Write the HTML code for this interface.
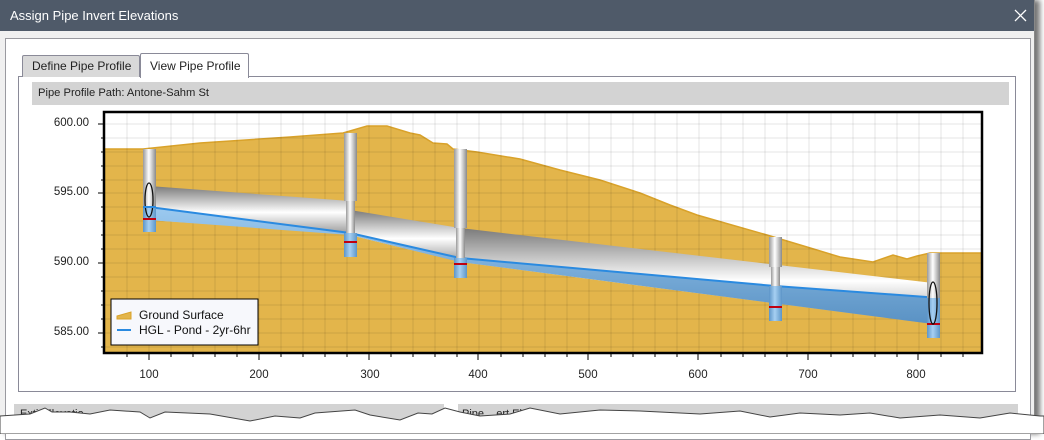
<!DOCTYPE html>
<html><head><meta charset="utf-8"><style>
body{margin:0;width:1044px;height:434px;background:#fff;position:relative;overflow:hidden;font-family:"Liberation Sans",sans-serif;}
.win{position:absolute;left:0;top:0;width:1034px;height:434px;background:#f0f0f0;border-right:1px solid #888;box-shadow:5px 0 5px #777;}
.title{position:absolute;left:0;top:0;width:1034px;height:31px;background:#4f5a69;color:#fff;font-size:13px;line-height:31px;}
.title span{position:absolute;left:10px}
.inner{position:absolute;left:5px;top:38px;width:1024px;height:400px;background:#fff;border:1px solid #9a9aa0;}
.tab{position:absolute;top:55px;height:21px;font-size:12px;line-height:21px;color:#222;border:1px solid #8a8a98;border-bottom:none;border-radius:2px 2px 0 0;}
.panel{position:absolute;left:18px;top:76px;width:996px;height:314px;border:1px solid #8a8a98;background:#fff;}
.hdr{position:absolute;left:32px;top:82px;width:977px;height:23px;background:#d3d3d3;font-size:11.2px;line-height:23px;color:#222;}
.ylab{position:absolute;left:40px;width:49px;text-align:right;font-size:11.5px;color:#222;}
.xlab{position:absolute;top:369px;width:40px;text-align:center;font-size:11.5px;color:#222;}
.strip{position:absolute;top:404px;height:30px;background:#d3d3d3;}
</style></head><body>
<div class="win">
<div class="title"><span>Assign Pipe Invert Elevations</span>
<svg style="position:absolute;left:1014px;top:9px" width="13" height="13"><path d="M1 1L12 12M12 1L1 12" stroke="#fff" stroke-width="1.3"/></svg></div>
<div class="inner"></div>
<div class="panel"></div>
<div class="tab" style="left:22px;width:116px;background:#d9d9d9;"><span style="padding-left:9px">Define Pipe Profile</span></div>
<div class="tab" style="left:140px;top:53px;height:24px;width:107px;background:#fff;line-height:25px;"><span style="padding-left:9px">View Pipe Profile</span></div>
<div class="hdr"><span style="padding-left:6px">Pipe Profile Path: Antone-Sahm St</span></div>
<div class="ylab" style="top:117px">600.00</div>
<div class="ylab" style="top:186px">595.00</div>
<div class="ylab" style="top:256px">590.00</div>
<div class="ylab" style="top:326px">585.00</div>
<div class="xlab" style="left:129px">100</div><div class="xlab" style="left:239px">200</div><div class="xlab" style="left:350px">300</div><div class="xlab" style="left:458px">400</div><div class="xlab" style="left:568px">500</div><div class="xlab" style="left:678px">600</div><div class="xlab" style="left:788px">700</div><div class="xlab" style="left:896px">800</div>
<svg style="position:absolute;left:0;top:0" width="1044" height="434">
<defs>
<linearGradient id="pg" x1="0" y1="0" x2="0" y2="1"><stop offset="0" stop-color="#7a7a7a"/><stop offset=".55" stop-color="#fff"/><stop offset="1" stop-color="#9a9a9a"/></linearGradient>
<linearGradient id="bg" x1="0" y1="0" x2="0" y2="1"><stop offset="0" stop-color="#9ccaf0"/><stop offset="1" stop-color="#5a92c4"/></linearGradient>
<linearGradient id="mg" x1="0" y1="0" x2="1" y2="0"><stop offset="0" stop-color="#999"/><stop offset=".45" stop-color="#fff"/><stop offset="1" stop-color="#8a8a8a"/></linearGradient>
<linearGradient id="mb" x1="0" y1="0" x2="1" y2="0"><stop offset="0" stop-color="#5d95c8"/><stop offset=".45" stop-color="#a6d0f2"/><stop offset="1" stop-color="#5d95c8"/></linearGradient>
<clipPath id="pc"><rect x="104" y="112" width="878" height="241"/></clipPath>
</defs>
<rect x="104" y="112" width="878" height="241" fill="#fff"/>
<g clip-path="url(#pc)">
<path d="M104 149L143 149L200 143L290 137L343 133L367 126L387 126L410 133L420 135L433 143L447 144L453 149L477 152L520 159L560 170L600 180L640 193L670 205L697 215L767 235L807 247L840 257L873 262L893 255L907 259L917 256L930 253L982 253L982 353L104 353Z" fill="#e3b54b" stroke="#d9a22a" stroke-width="1.5"/>
<g stroke="#000" stroke-opacity=".1" stroke-width="1">
<path d="M127 112V353M149 112V353M171 112V353M193 112V353M215 112V353M237 112V353M259 112V353M281 112V353M303 112V353M325 112V353M347 112V353M369 112V353M391 112V353M413 112V353M435 112V353M457 112V353M479 112V353M501 112V353M523 112V353M545 112V353M567 112V353M589 112V353M611 112V353M633 112V353M655 112V353M677 112V353M699 112V353M721 112V353M743 112V353M765 112V353M787 112V353M809 112V353M831 112V353M853 112V353M875 112V353M897 112V353M919 112V353M941 112V353M963 112V353"/>
<path d="M104 124H982M104 138H982M104 152H982M104 166H982M104 180H982M104 193H982M104 207H982M104 221H982M104 235H982M104 249H982M104 263H982M104 277H982M104 291H982M104 305H982M104 319H982M104 333H982M104 347H982"/>
</g>
<path d="M149 186L350 201L350 234L149 220Z" fill="url(#pg)"/>
<path d="M350 210L460 228L460 262L350 235Z" fill="url(#pg)"/>
<path d="M460 228L933 283L933 324L460 262Z" fill="url(#pg)"/>
<path d="M149 207L350 233L460 258L775 286L933 298L933 324L460 262L350 235L149 220Z" fill="url(#bg)"/>
<path d="M143 207L149 207L350 233L460 258L775 286L940 298" fill="none" stroke="#2a8ae0" stroke-width="2"/>
<rect x="143" y="149" width="13" height="58" fill="url(#mg)"/><rect x="143" y="207" width="13" height="25" fill="url(#mb)"/>
<rect x="344" y="133" width="13" height="68" fill="url(#mg)"/><rect x="346" y="201" width="9" height="32" fill="url(#mg)"/><rect x="344" y="233" width="13" height="24" fill="url(#mb)"/>
<rect x="454" y="149" width="13" height="79" fill="url(#mg)"/><rect x="456" y="228" width="9" height="30" fill="url(#mg)"/><rect x="454" y="258" width="13" height="20" fill="url(#mb)"/>
<rect x="769" y="237" width="13" height="30" fill="url(#mg)"/><rect x="771" y="267" width="9" height="19" fill="url(#mg)"/><rect x="769" y="286" width="13" height="35" fill="url(#mb)"/>
<rect x="927" y="253" width="13" height="45" fill="url(#mg)"/><rect x="927" y="298" width="13" height="40" fill="url(#mb)"/>
<g stroke="#c00010" stroke-width="2"><path d="M143 219H156M344 242H357M454 264H467M769 307H782M927 324H940"/></g>
<ellipse cx="149" cy="200" rx="4" ry="17" fill="none" stroke="#111" stroke-width="1.3"/>
<ellipse cx="933" cy="303" rx="4" ry="21" fill="none" stroke="#111" stroke-width="1.3"/>
<path d="M143 207L156 207" stroke="#2a8ae0" stroke-width="2"/>
</g>
<rect x="104" y="112" width="878" height="241" fill="none" stroke="#000" stroke-width="2.5"/>
<g stroke="#000" stroke-width="1"><path d="M98 124H104M98 193H104M98 263H104M98 333H104M101 138H104M101 152H104M101 166H104M101 180H104M101 207H104M101 221H104M101 235H104M101 249H104M101 277H104M101 291H104M101 305H104M101 319H104M101 347H104"/>
<path d="M149 353V360M259 353V360M369 353V360M478 353V360M588 353V360M698 353V360M808 353V360M918 353V360M127 353V357M171 353V357M193 353V357M215 353V357M237 353V357M281 353V357M303 353V357M325 353V357M347 353V357M391 353V357M413 353V357M435 353V357M457 353V357M501 353V357M523 353V357M545 353V357M567 353V357M611 353V357M633 353V357M655 353V357M677 353V357M721 353V357M743 353V357M765 353V357M787 353V357M831 353V357M853 353V357M875 353V357M897 353V357M941 353V357M963 353V357"/></g>
<rect x="111" y="299" width="147" height="46" fill="#f7f8fc" stroke="#000" stroke-width="1"/>
<path d="M117 316L131 312L131 319L117 319Z" fill="#e3b54b" stroke="#d9a22a"/>
<path d="M117 330H131" stroke="#2a8ae0" stroke-width="2"/>
<text x="139" y="319" font-size="12" font-family="Liberation Sans,sans-serif" fill="#111">Ground Surface</text>
<text x="139" y="334" font-size="12" font-family="Liberation Sans,sans-serif" fill="#111">HGL - Pond - 2yr-6hr</text>
</svg>
<div class="strip" style="left:14px;width:430px"></div>
<div class="strip" style="left:458px;width:560px"></div>
<div style="position:absolute;left:20px;top:408px;font-size:11px;color:#222">Exti&nbsp;&nbsp;Elevatio</div>
<div style="position:absolute;left:462px;top:408px;font-size:11px;color:#222">Pipe&nbsp;&nbsp;&nbsp;&nbsp;ert El</div>
</div>
<svg style="position:absolute;left:0;top:0" width="1044" height="434">
<path d="M0 416L30 414L45 408L52 412L70 412L90 414L110 410L140 412L150 418L165 412L210 414L250 421L275 416L300 418L315 413L355 410L370 415L400 420L418 413L432 414L445 408L460 412L480 416L510 414L530 408L560 414L600 410L640 411L660 412L700 414L740 411L770 417L800 413L840 415L870 413L900 418L940 415L980 418L1010 413L1040 416L1044 416L1044 434L0 434Z" fill="#fff" stroke="#444" stroke-width="1"/>
</svg>
</body></html>
